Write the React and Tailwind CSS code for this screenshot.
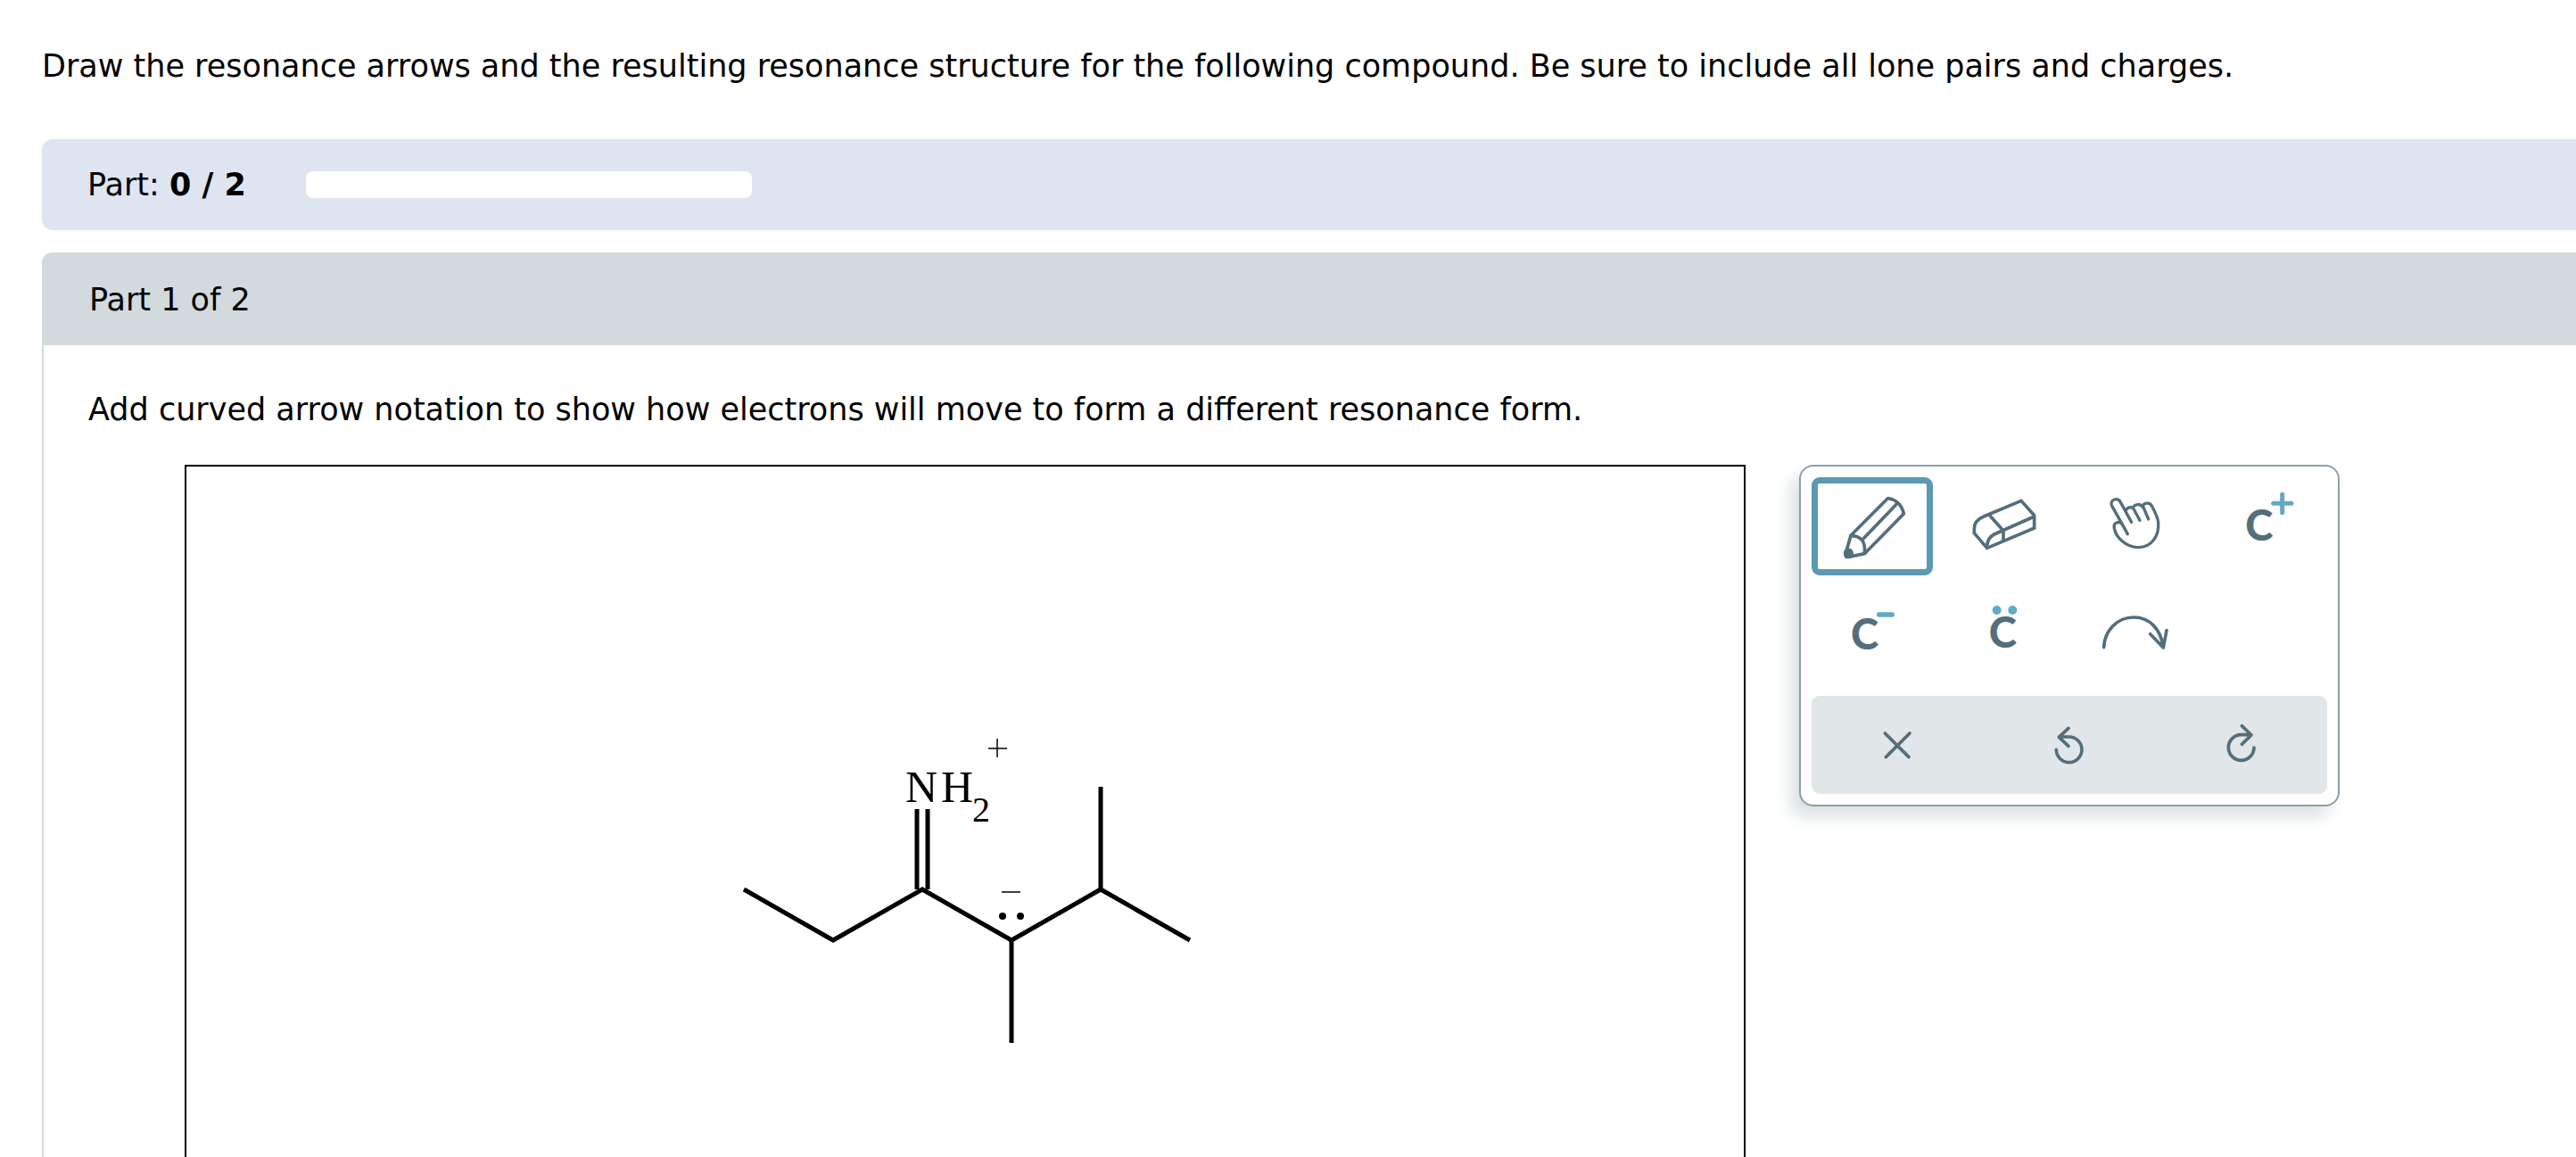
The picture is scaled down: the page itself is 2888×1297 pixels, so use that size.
const DARK = "#546e7a";
const LIGHT = "#62a9c6";

function ToolIcon({ viewBox, children }) {
  return (
    <svg
      viewBox={viewBox}
      className="h-24 w-[120px]"
      fill="none"
      stroke={DARK}
      strokeWidth="11"
      strokeLinecap="round"
      strokeLinejoin="round"
      aria-hidden="true"
    >
      {children}
    </svg>
  );
}

function CarbonLetter({ x, y }) {
  return (
    <text x={x} y={y} fill={DARK} stroke="none" fontSize="142" fontWeight="900" fontFamily="Lato, sans-serif">
      C
    </text>
  );
}

const tools = [
  {
    label: "Pencil",
    selected: true,
    icon: (
      <ToolIcon viewBox="176 129 360 288">
        <path d="M408 179 284 304 266 366Q264 378 276 376L330 365 462 231Q458 208 441 193 427 181 408 179Z" />
        <path d="M284 305Q308 304 322 320 333 334 330 363M323 318 441 195" />
        <path d="M267 350Q284 346 291 360 293 369 290 374L270 377Q264 374 265 366Z" fill={DARK} stroke="none" />
        <circle cx="276" cy="363" r="11" fill={DARK} />
      </ToolIcon>
    ),
  },
  {
    label: "Eraser",
    icon: (
      <ToolIcon viewBox="619 129 360 288">
        <g strokeLinejoin="miter" strokeLinecap="butt">
          <path d="M859 187 733 240Q700 254 701 282V296L744 346 903 279V236Z" />
          <path d="M753 236 799 288V323M744 346Q743 313 768 300L903 240" />
        </g>
      </ToolIcon>
    ),
  },
  {
    label: "Select",
    icon: (
      <ToolIcon viewBox="41 129 360 288">
        <g strokeWidth="10">
          <path d="M208 259 170 190C162 175 135 182 141 202L195 299" />
          <path d="M175 264C163 254 146 262 150 279 155 310 190 345 232 344 275 343 302 306 298 260 297 245 290 230 276 204 270 191 250 194 246 204L265 249" />
          <path d="M189 219C196 207 210 206 216 216L236 253M213 210C219 197 238 196 245 208" />
        </g>
      </ToolIcon>
    ),
  },
  {
    label: "Positive carbon charge",
    icon: (
      <ToolIcon viewBox="484 129 360 288">
        <CarbonLetter x="593" y="320" />
        <path d="M687 196H748M717 166V227" stroke={LIGHT} strokeWidth="15" />
      </ToolIcon>
    ),
  },
  {
    label: "Negative carbon charge",
    icon: (
      <ToolIcon viewBox="176 69 360 288">
        <CarbonLetter x="284" y="266" />
        <path d="M379 150H423" stroke={LIGHT} strokeWidth="16" />
      </ToolIcon>
    ),
  },
  {
    label: "Lone pair",
    icon: (
      <ToolIcon viewBox="619 69 360 288">
        <CarbonLetter x="750" y="260" />
        <g fill={LIGHT} stroke="none">
          <circle cx="777" cy="135" r="15" />
          <circle cx="830" cy="135" r="15" />
        </g>
      </ToolIcon>
    ),
  },
  {
    label: "Curved arrow",
    icon: (
      <ToolIcon viewBox="41 69 360 288">
        <path d="M115 260C117 205 158 159 216 159 270 159 307 200 315 261M271 215 315 261 326 203" />
      </ToolIcon>
    ),
  },
];

const actions = [
  { label: "Clear", viewBox: "112 48 180 180", d: "M161 99 241 179M244 99 164 179" },
  {
    label: "Undo",
    viewBox: "690 48 180 180",
    d: "M736 154A43 43 0 1 0 779 111H745M777 82 745 112 777 142",
  },
  {
    label: "Redo",
    viewBox: "1268 48 180 180",
    d: "M1400 147A43 43 0 1 1 1357 104H1391M1359 74 1391 105 1359 136",
  },
];

function Molecule() {
  return (
    <svg viewBox="812 800 540 400" className="h-[400px] w-[540px]" role="img" aria-label="Compound structure">
      <g fill="none" stroke="black" strokeWidth="5">
        <path d="M834 998 934 1055 1034 998 1134 1055 1234 998 1334 1055" />
        <path d="M1028 908V998M1040 908V998M1134 1055V1170M1234 883V998" />
      </g>
      <path d="M1108 840H1129M1118 829V850M1123 1001H1144" stroke="black" strokeWidth="1.5" />
      <circle cx="1124" cy="1028" r="4" />
      <circle cx="1144" cy="1028" r="4" />
      <g fontFamily="Liberation Serif, serif">
        <text x="1015" y="900" fontSize="50">N</text>
        <text x="1055" y="900" fontSize="50">H</text>
        <text x="1090" y="922" fontSize="40">2</text>
      </g>
    </svg>
  );
}

function Toolbox() {
  return (
    <aside className="flex w-[606px] shrink-0 flex-col gap-[15px] rounded-2xl border-2 border-[#8d9fa6] bg-white p-3 shadow-[-10px_12px_18px_0px_#dbe2e5]">
      <div className="grid grid-cols-4 gap-x-3 gap-y-[10px]">
        {tools.map((tool) => (
          <button
            key={tool.label}
            type="button"
            aria-label={tool.label}
            aria-pressed={Boolean(tool.selected)}
            className={
              tool.selected
                ? "flex h-[110px] items-center justify-center rounded-[9px] border-[7px] border-[#5b99b4]"
                : "flex h-[110px] items-center justify-center rounded-[9px] border-[7px] border-transparent"
            }
          >
            {tool.icon}
          </button>
        ))}
      </div>
      <div className="grid h-[110px] grid-cols-3 rounded-[9px] bg-[#e1e6e8]">
        {actions.map((action) => (
          <button
            key={action.label}
            type="button"
            aria-label={action.label}
            className="flex items-center justify-center"
          >
            <svg
              viewBox={action.viewBox}
              className="size-[60px]"
              fill="none"
              stroke={DARK}
              strokeWidth="11"
              strokeLinecap="round"
              strokeLinejoin="round"
              aria-hidden="true"
            >
              <path d={action.d} />
            </svg>
          </button>
        ))}
      </div>
    </aside>
  );
}

export default function App() {
  return (
    <main className="h-screen overflow-hidden bg-white pl-[47px] font-['DejaVu_Sans',Verdana,sans-serif] text-[35px] leading-[40px] text-black">
      <p className="pt-[54px] pb-[62px]">
        Draw the resonance arrows and the resulting resonance structure for the following compound. Be sure to include
        all lone pairs and charges.
      </p>
      <div className="flex h-[102px] items-center gap-[67px] rounded-l-xl bg-[#dee5f0] pl-[51px]">
        <span>
          Part: <b>0 / 2</b>
        </span>
        <div
          role="progressbar"
          aria-label="Parts completed"
          aria-valuenow={0}
          aria-valuemin={0}
          aria-valuemax={2}
          className="h-[30px] w-[500px] rounded-lg bg-white"
        />
      </div>
      <section className="mt-[25px] rounded-tl-xl border-l-2 border-[#d6d8d9]">
        <h2 className="-ml-0.5 flex h-[104px] items-center rounded-tl-xl bg-[#d3dadd] pt-0.5 pl-[53px]">
          Part 1 of 2
        </h2>
        <p className="pt-[52px] pb-[42px] pl-[50px]">
          Add curved arrow notation to show how electrons will move to form a different resonance form.
        </p>
        <div className="flex items-start gap-[60px] pl-[158px]">
          <div className="flex h-[956px] max-w-[1750px] flex-1 items-center justify-center border-2 border-black">
            <Molecule />
          </div>
          <Toolbox />
        </div>
      </section>
    </main>
  );
}
